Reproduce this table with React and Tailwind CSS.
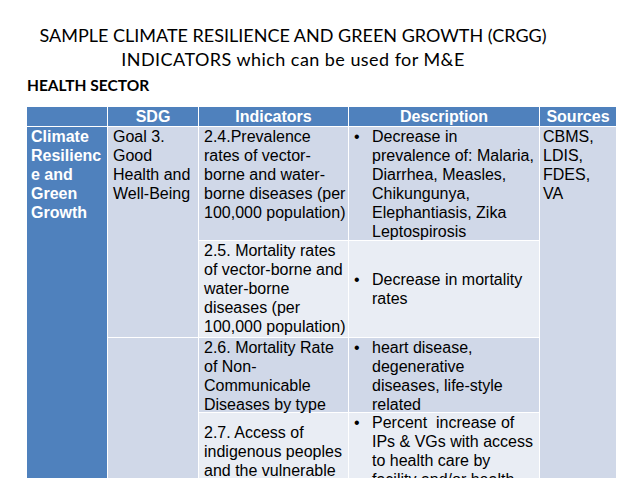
export default function App() {
  const cell = "px-[5px] text-[16px] leading-[19px] text-black whitespace-nowrap"
  const dark = "bg-[#d0d8e8]"
  const light = "bg-[#e9edf4]"

  const Bullet = ({ children }) => (
    <div className="flex">
      <span className="w-[18px] shrink-0">•</span>
      <span>{children}</span>
    </div>
  )

  return (
    <div className="w-[638px] h-[478px] overflow-hidden bg-white" style={{ fontFamily: "'Liberation Sans', Arial, sans-serif" }}>
      <div className="pt-[23px] ml-[27px] w-[532px] text-center text-[18px] leading-[24px] text-black whitespace-nowrap" style={{ fontFamily: "Lato, 'Open Sans', sans-serif" }}>
        <div>SAMPLE CLIMATE RESILIENCE AND GREEN GROWTH (CRGG)</div>
        <div className="tracking-[0.45px]">INDICATORS which can be used for M&amp;E</div>
      </div>
      <div className="ml-[27px] mt-[2px] text-[15.5px] leading-[24px] font-bold text-black" style={{ fontFamily: "Lato, 'Open Sans', sans-serif" }}>
        HEALTH SECTOR
      </div>

      <div className="ml-[27px] mt-[10px] grid grid-cols-[80px_90px_149px_190px_76px] grid-rows-[19px_113px_96px_74px_120px] gap-px bg-white">
        {/* header */}
        <div className="bg-[#4f81bd]" />
        <div className="bg-[#4f81bd] text-center text-white font-bold text-[16px] leading-[19px]">SDG</div>
        <div className="bg-[#4f81bd] text-center text-white font-bold text-[16px] leading-[19px]">Indicators</div>
        <div className="bg-[#4f81bd] text-center text-white font-bold text-[16px] leading-[19px]">Description</div>
        <div className="bg-[#4f81bd] text-center text-white font-bold text-[16px] leading-[19px]">Sources</div>

        <div className="row-span-4 bg-[#4f81bd] px-[4px] text-white font-bold text-[16px] leading-[19px] whitespace-nowrap">
          Climate<br />Resilienc<br />e and<br />Green<br />Growth
        </div>
        <div className={`row-span-2 ${dark} ${cell}`}>
          Goal 3.<br />Good<br />Health and<br />Well-Being
        </div>
        <div className={`${dark} ${cell}`}>
          2.4.Prevalence<br />rates of vector-<br />borne and water-<br />borne diseases (per<br />100,000 population)
        </div>
        <div className={`${dark} ${cell}`}>
          <Bullet>
            Decrease in<br />prevalence of: Malaria,<br />Diarrhea, Measles,<br />Chikungunya,<br />Elephantiasis, Zika<br />Leptospirosis
          </Bullet>
        </div>
        <div className={`row-span-4 ${dark} ${cell} pl-[3px]`}>
          CBMS,<br />LDIS,<br />FDES,<br />VA
        </div>

        <div className={`${light} ${cell}`}>
          2.5. Mortality rates<br />of vector-borne and<br />water-borne<br />diseases (per<br />100,000 population)
        </div>
        <div className={`${light} ${cell} flex items-center`}>
          <Bullet>
            Decrease in mortality<br />rates
          </Bullet>
        </div>

        <div className={`row-span-2 ${dark} ${cell}`} />
        <div className={`${dark} ${cell}`}>
          2.6. Mortality Rate<br />of Non-<br />Communicable<br />Diseases by type
        </div>
        <div className={`${dark} ${cell}`}>
          <Bullet>
            heart disease,<br />degenerative<br />diseases, life-style<br />related
          </Bullet>
        </div>

        <div className={`${light} ${cell} pt-[10px]`}>
          2.7. Access of<br />indigenous peoples<br />and the vulnerable<br />groups to health<br />care
        </div>
        <div className={`${light} ${cell}`}>
          <Bullet>
            Percent&nbsp; increase of<br />IPs &amp; VGs with access<br />to health care by<br />facility and/or health<br />workers
          </Bullet>
        </div>
      </div>
    </div>
  )
}
